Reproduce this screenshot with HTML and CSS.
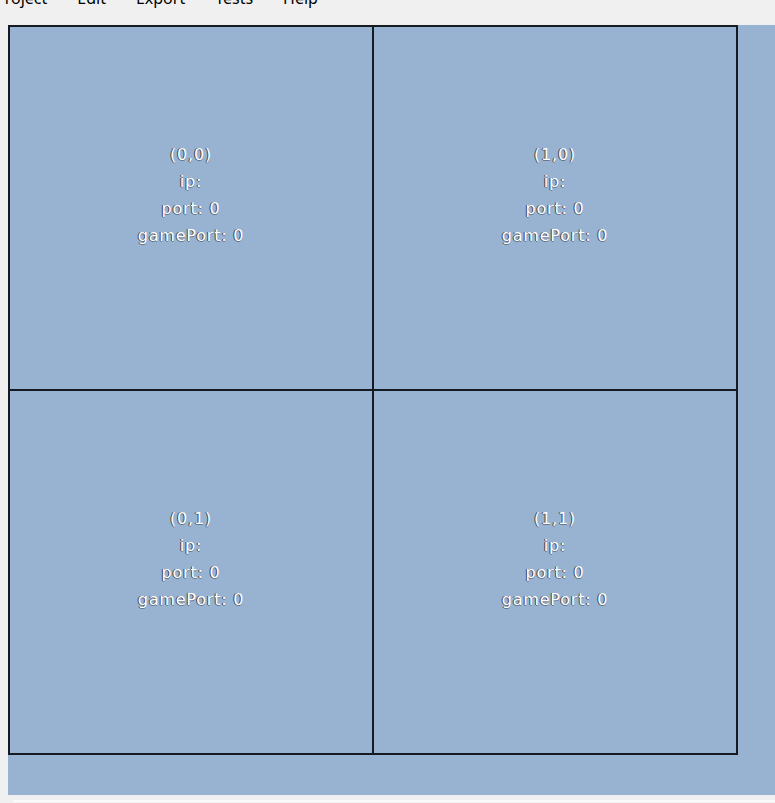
FILE: index.html
```html
<!DOCTYPE html>
<html>
<head>
<meta charset="utf-8">
<link rel="stylesheet" href="styles.css">
</head>
<body>
<div class="menubar">
  <div class="menu">
    <span>Project</span><span>Edit</span><span>Export</span><span>Tests</span><span>Help</span>
  </div>
</div>
<div class="canvas">
  <div class="grid">
    <div class="cell"><div>(0,0)</div><div>ip:</div><div>port: 0</div><div>gamePort: 0</div></div>
    <div class="cell"><div>(1,0)</div><div>ip:</div><div>port: 0</div><div>gamePort: 0</div></div>
    <div class="cell"><div>(0,1)</div><div>ip:</div><div>port: 0</div><div>gamePort: 0</div></div>
    <div class="cell"><div>(1,1)</div><div>ip:</div><div>port: 0</div><div>gamePort: 0</div></div>
  </div>
</div>
<div class="status"></div>
</body>
</html>
```
FILE: styles.css
```css
html, body {
  margin: 0;
  padding: 0;
  background: #f0f0f0;
  overflow: hidden;
}
body {
  width: 775px;
  height: 803px;
}
.menubar {
  height: 25px;
  overflow: hidden;
}
.menu {
  display: flex;
  gap: 30px;
  margin-left: -5px;
  margin-top: -12px;
  font-family: "Noto Sans", "Open Sans", sans-serif;
  font-size: 16px;
  line-height: 20px;
  color: #000;
}
.canvas {
  margin-left: 8px;
  width: 767px;
  height: 770px;
  background: #98b3d1;
}
.grid {
  display: grid;
  grid-template-columns: 364px 364px;
  grid-template-rows: 364px 364px;
  width: 728px;
  border: 1px solid #151a20;
}
.cell {
  box-sizing: border-box;
  border: 1px solid #151a20;
  padding-top: 114px;
  text-align: center;
  font-family: "DejaVu Sans", sans-serif;
  font-size: 16px;
  letter-spacing: 0.8px;
  line-height: 27px;
  color: #ffffff;
  text-shadow: -1px 0 0 #3a4350, 0 1px 0 rgba(40, 48, 60, 0.45);
}
.status {
  margin-left: 13px;
  margin-top: 5px;
  height: 2px;
  background: #fafafa;
}
```
